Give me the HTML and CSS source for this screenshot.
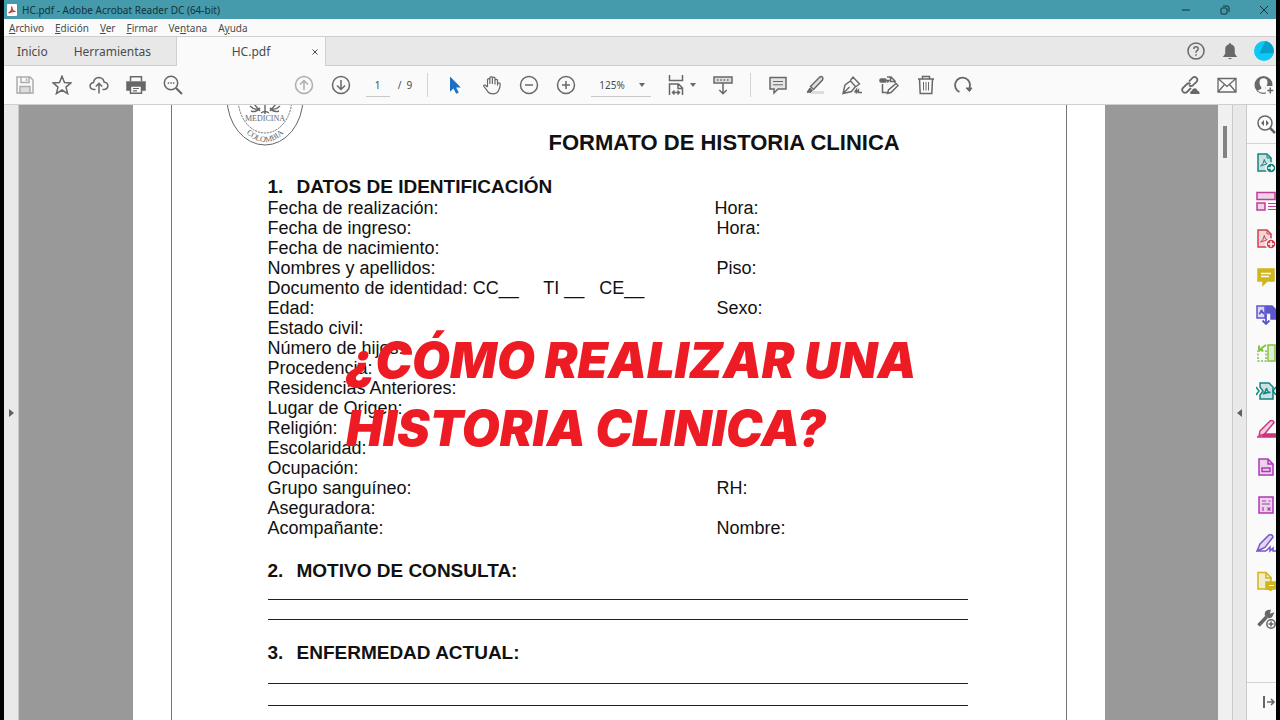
FILE: index.html
```html
<!DOCTYPE html>
<html lang="es">
<head>
  <meta charset="UTF-8" />
  <meta name="viewport" content="width=device-width, initial-scale=1.0" />
  <title>HC.pdf - Adobe Acrobat Reader DC (64-bit)</title>
  <link rel="stylesheet" href="styles.css">
</head>
<body>

  <div class="window">
    <header class="titlebar">
      <svg class="app-icon" viewBox="0 0 10 12"><rect width="10" height="12" rx="1" fill="#fff"/><path d="M1.5 9C4 8 5 5 4.700 2.500C5 6 6.500 7.500 8.500 7.500C6 7 4 7.500 1.500 9Z" fill="none" stroke="#d3302f" stroke-width="1.200"/></svg>
      <span class="titlebar-text">HC.pdf - Adobe Acrobat Reader DC (64-bit)</span>
      <div class="window-buttons">
        <button aria-label="Minimizar"><svg viewBox="0 0 10 10"><path d="M1 5h8"/></svg></button>
        <button aria-label="Restaurar"><svg viewBox="0 0 10 10"><rect x="1" y="3" width="6" height="6" rx="1"/><path d="M3 1h5l1 1v5"/></svg></button>
        <button aria-label="Cerrar"><svg viewBox="0 0 10 10"><path d="M1 1l8 8M9 1l-8 8"/></svg></button>
      </div>
    </header>

    <nav class="menubar">
      <button><u>A</u>rchivo</button>
      <button><u>E</u>dición</button>
      <button><u>V</u>er</button>
      <button><u>F</u>irmar</button>
      <button>Ve<u>n</u>tana</button>
      <button>A<u>y</u>uda</button>
    </nav>

    <div class="tabs">
      <div class="tabs-home">
        <button>Inicio</button>
        <button>Herramientas</button>
      </div>
      <div class="tab-active">
        <span>HC.pdf</span>
        <button aria-label="Cerrar pestaña"><svg viewBox="0 0 8 8"><path d="M1.500 1.500l5 5M6.500 1.500l-5 5"/></svg></button>
      </div>
      <div class="tabs-account">
        <button class="icon" aria-label="Ayuda"><svg viewBox="0 0 20 20"><circle cx="10" cy="10" r="8"/><path d="M7.800 8q0-2.200 2.200-2.200t2.200 2q0 1.200-1.200 1.900q-1 .7-1 2M10 13.200v1.600"/></svg></button>
        <button class="icon" aria-label="Notificaciones"><svg viewBox="0 0 20 20"><path class="solid" d="M10 2q1 0 1 1.200q3.800.8 3.800 5.300v4.200l2.400 3.300H2.800l2.400-3.300V8.500q0-4.500 3.800-5.300q0-1.200 1-1.200ZM8 17h4q-2 2.500-4 0Z" stroke="none"/></svg></button>
        <button class="icon" aria-label="Cuenta"><svg viewBox="0 0 20 20"><circle cx="10" cy="10" r="10" fill="#0cc8f4" stroke="none"/><path d="M11 1L5.500 12.500L19.500 12A10 10 0 0 0 11 0Z" fill="#079fcb" stroke="none"/></svg></button>
      </div>
    </div>

    <div class="toolbar">
      <div class="tools">
        <button class="icon faded" aria-label="Guardar"><svg viewBox="0 0 20 20"><path d="M2 2h13l3 3v13H2ZM6 2v5.500h8V2M11.500 3.500v2.500"/><rect x="5" y="11.500" width="10" height="6.500" fill="#ddd"/></svg></button>
        <button class="icon" aria-label="Destacar"><svg viewBox="0 0 20 20"><path d="M10 1.200l2.500 6.300l6.500.4l-5 4.200l1.600 6.500L10 15l-5.600 3.600L6 12.100l-5-4.200l6.500-.4Z"/></svg></button>
        <button class="icon" aria-label="Subir a la nube"><svg viewBox="0 0 20 20"><path d="M6.500 14.500H5q-4-.3-3.900-3.700q.3-3 3.400-3.300Q5.300 2.600 9.800 2.500q4.400.2 5.400 4.700q3.700.3 3.700 3.700q-.3 3.300-3.900 3.600h-1.500M10 18.500V8.500M6.800 11.500L10 8.300l3.200 3.200"/></svg></button>
        <button class="icon" aria-label="Imprimir"><svg viewBox="0 0 20 20"><path class="solid" d="M1 7h18v8h-3v-3H4v3H1Z"/><path d="M4.500 6V1.800h11V6"/><path d="M4.500 11h11v7.200h-11Z" fill="#fafafa"/><path d="M7 13.500h6M7 15.800h4" stroke-width="1.200"/></svg></button>
        <button class="icon" aria-label="Buscar"><svg viewBox="0 0 20 20"><circle cx="8" cy="8" r="6.700"/><path d="M13 13l6 6" stroke-width="2.200"/><path d="M4.700 8h1.500M7.300 8h1.500M9.900 8h1.500"/></svg></button>
      </div>

      <div class="tools tools-main">
        <button class="icon faded" aria-label="Página anterior"><svg viewBox="0 0 20 20"><circle cx="10" cy="10" r="8.500"/><path d="M10 15V5.500M6 9.500l4-4l4 4"/></svg></button>
        <button class="icon" aria-label="Página siguiente"><svg viewBox="0 0 20 20"><circle cx="10" cy="10" r="8.500"/><path d="M10 5v9.500M6 10.500l4 4l4-4"/></svg></button>
        <div class="page-number">
          <input type="text" value="1" aria-label="Número de página">
          <span>/&nbsp; 9</span>
        </div>
        <i class="separator"></i>
        <button class="icon" aria-label="Seleccionar"><svg viewBox="0 0 20 20"><path d="M5 1.500v15.200l3.500-3.200l2.700 5.300l2.600-1.300l-2.700-5h4.700Z" fill="#1d6fc4" stroke="none"/></svg></button>
        <button class="icon" aria-label="Mano"><svg viewBox="0 0 20 20"><path d="M5.500 12V4.500q1.200-1.600 2.400 0V9M7.900 9V2.500q1.200-1.800 2.500 0V9M10.400 3q1.300-1.600 2.600 0v6.500M13 5q1.300-1.400 2.500 0v5.500M15.500 8.500q1.400-1.400 2.700.2q0 4-1.600 6.800q-1.600 3.400-5.600 3.400q-4 0-5.700-3L1.600 11q.8-2.400 3.900 1" stroke-width="1.200"/></svg></button>
        <button class="icon" aria-label="Reducir"><svg viewBox="0 0 20 20"><circle cx="10" cy="10" r="8.500"/><path d="M6 10h8"/></svg></button>
        <button class="icon" aria-label="Ampliar"><svg viewBox="0 0 20 20"><circle cx="10" cy="10" r="8.500"/><path d="M6 10h8M10 6v8"/></svg></button>
        <div class="zoom">
          <select aria-label="Nivel de zoom"><option>100%</option><option selected>125%</option><option>150%</option></select>
          <svg class="caret" viewBox="0 0 6 4"><path d="M0 0h6L3 4Z"/></svg>
        </div>
        <button class="icon fit" aria-label="Ajustar página"><svg viewBox="0 0 20 20"><path d="M3.500 0v5.500h13V0M3.500 20V9h9l4 4v7M12 9.500V13.500h4M6.500 17.500h7M8.500 15.500l-2 2l2 2M11.500 15.500l2 2l-2 2"/></svg><svg class="caret" viewBox="0 0 6 4"><path d="M0 0h6L3 4Z"/></svg></button>
        <button class="icon" aria-label="Mostrar herramientas"><svg viewBox="0 0 20 20"><rect x="1" y="2" width="18" height="6" fill="#ddd"/><path d="M4 5h1.500M7.300 5h1.500M10.600 5h1.500M14 5h1.500M10 8v10.500M6.300 15l3.700 3.700l3.700-3.700"/></svg></button>
        <i class="separator"></i>
        <button class="icon" aria-label="Comentario"><svg viewBox="0 0 20 20"><path d="M2 2.500h16v11.500h-8L6 18v-4H2Z" fill="#e4e4e4"/><path d="M5 6.500h10M5 9.800h10" stroke-width="1"/></svg></button>
        <button class="icon" aria-label="Resaltar"><svg viewBox="0 0 20 20"><path d="M5 16h14v3H5Z" fill="#ddd" stroke="none"/><path d="M5.500 11.500L14.800 2q1.600-1 2.700.2q1 1.300 0 2.700L8.500 14.500Z" fill="#ddd"/><path class="solid" d="M4.800 13l2.500 2.500l-1.500 1.800H2Z" stroke-width="1"/></svg></button>
        <button class="icon" aria-label="Firmar"><svg viewBox="0 0 20 20"><path d="M1 18.500L3 10L8.500 6L13.500 11.500L9.500 16.500ZM1.300 18.200L7.500 12M8.500 5.500L11 2L17.500 9L14 11.500M12.500 17.500l2-3v3l2-2.500v2.500H20" stroke-width="1.400"/></svg></button>
        <button class="icon" aria-label="Sellar"><svg viewBox="0 0 20 20"><path d="M8 2h4l4 4v2M11.500 2.500V6.500h4M3.500 9v8.500H8M17 8.500l2 2L12 17.500l-3.500 1l1-3.500Z"/><rect class="solid" x="1" y="4" width="6" height="3" rx="1"/><path d="M7 5.500h3l-1.800 2"/></svg></button>
        <button class="icon" aria-label="Eliminar"><svg viewBox="0 0 20 20"><path d="M2 4h16M6.500 3.500V1.500h7v2M3.500 4l.7 14.500h11.600L16.500 4"/><path d="M7.500 7v8.500M10 7v8.500M12.500 7v8.500" stroke-width="1"/></svg></button>
        <button class="icon" aria-label="Girar"><svg viewBox="0 0 20 20"><path d="M6.500 17A7.500 7.500 0 1 1 16.500 13" stroke-width="1.800"/><path class="solid" d="M13 13h6l-2.500 3.500Z" stroke-width="1"/></svg></button>
      </div>

      <div class="tools tools-share">
        <button class="icon" aria-label="Compartir vínculo"><svg viewBox="0 0 20 20"><path d="M9 6.500L12.500 2.800q2-1.800 4 0q1.800 2 0 4L13 10.200q-2 1.700-4 0M11 13l-4 4q-2 1.600-4-.2q-1.800-2 0-4l4-3.800q2-1.500 3.500 0" stroke-width="1.800"/><path class="solid" d="M10.500 19q-1-2.500 1.300-3.200q.7-2.600 3-2.500q2 .1 2.500 2.200q2.700.5 2.200 3.500Z" stroke="none"/></svg></button>
        <button class="icon" aria-label="Correo"><svg viewBox="0 0 20 20"><path d="M1 3.500h18v13.500H1ZM1 3.500l9 8l9-8M1 17l6.500-7.500M19 17l-6.500-7.500" stroke-width="1.300"/></svg></button>
        <button class="icon" aria-label="Invitar"><svg viewBox="0 0 20 20"><circle class="solid" cx="9.500" cy="10" r="9" stroke="none"/><path d="M9.500 3.200q4 0 4 4.300q0 3-1.800 4.800v1.500l3.800 2q-2.500 2-6 2t-6-2l3.800-2v-1.500Q5.500 10.500 5.500 7.500q0-4.300 4-4.300Z" fill="#fafafa" stroke="none"/><path d="M12 11h8v9h-8Z" fill="#fafafa" stroke="none"/><path d="M16.300 12.500v6M13.300 15.500h6"/></svg></button>
      </div>
    </div>

    <main class="workspace">
      <button class="pane-toggle" aria-label="Panel de navegación"><svg viewBox="0 0 5 8"><path d="M0 0l5 4l-5 4Z"/></svg></button>

      <div class="viewer">
        <article class="page">
          <div class="page-frame">
            <div class="page-head">
              <svg class="seal" viewBox="0 0 90 45">
                <ellipse cx="45" cy="-7" rx="38" ry="47"/>
                <ellipse cx="45" cy="-7" rx="27" ry="35" stroke-dasharray="2 1"/>
                <path d="M30 1q5 5 10 2q-4 5-9 3M60 1q-5 5-10 2q4 5 9 3M34-1l6 7M56-1l-6 7M45 0v9M41 8q4-3 8 0" stroke-width="1.400"/>
                <path id="seal-arc" d="M16 12Q28 37 45 37T74 12" stroke="none"/>
                <text x="45" y="16" text-anchor="middle">MEDICINA</text>
                <text><textPath href="#seal-arc" startOffset="50%" text-anchor="middle">COLOMBIA</textPath></text>
              </svg>
              <h1>FORMATO DE HISTORIA CLINICA</h1>
            </div>

            <section>
              <h2><span>1.</span>DATOS DE IDENTIFICACIÓN</h2>
              <ul class="fields">
                <li><span class="wide">Fecha de realización:</span><span>Hora:</span></li>
                <li><span>Fecha de ingreso:</span><span>Hora:</span></li>
                <li>Fecha de nacimiento:</li>
                <li><span>Nombres y apellidos:</span><span>Piso:</span></li>
                <li>Documento de identidad: CC__     TI __   CE__</li>
                <li><span>Edad:</span><span>Sexo:</span></li>
                <li>Estado civil:</li>
                <li>Número de hijos:</li>
                <li>Procedencia:</li>
                <li>Residencias Anteriores:</li>
                <li>Lugar de Origen:</li>
                <li>Religión:</li>
                <li>Escolaridad:</li>
                <li>Ocupación:</li>
                <li><span>Grupo sanguíneo:</span><span>RH:</span></li>
                <li>Aseguradora:</li>
                <li><span>Acompañante:</span><span>Nombre:</span></li>
              </ul>
            </section>

            <section>
              <h2><span>2.</span>MOTIVO DE CONSULTA:</h2>
              <hr>
              <hr>
            </section>

            <section class="loose">
              <h2><span>3.</span>ENFERMEDAD ACTUAL:</h2>
              <hr>
              <hr>
            </section>
          </div>
        </article>
      </div>

      <div class="scrollbar"><div class="scrollbar-thumb"></div></div>
      <button class="pane-toggle pane-toggle-right" aria-label="Panel de herramientas"><svg viewBox="0 0 5 8"><path d="M5 0L0 4l5 4Z"/></svg></button>

      <aside class="side-tools">
        <button class="search" aria-label="Buscar herramientas"><svg viewBox="0 0 20 20"><circle cx="9" cy="9" r="7"/><path d="M14 14l5 5" stroke-width="2.500"/><path d="M8 6v6L5 9ZM10 6v6l3-3Z" fill="currentColor" stroke="none"/></svg></button>
        <button class="teal" aria-label="Exportar PDF"><svg viewBox="0 0 20 20"><path class="tint" d="M2 1h9l4 4v13H2Z"/><path d="M11 1v4h4M4.500 13q3.500-2 3.800-6.500q.5 4.500 4.200 5q-4-.5-8 1.500" stroke-width="1"/><circle cx="15" cy="15" r="5" fill="currentColor" stroke="#fafafa"/><path d="M12 15h5M15 12.800l2.200 2.200l-2.200 2.200" stroke="#fff"/></svg></button>
        <button class="magenta" aria-label="Organizar páginas"><svg viewBox="0 0 20 20"><path class="tint" d="M1 1.500h18v7H1ZM1 12h8v7H1Z"/><path d="M12 12.500h8M12 15.500h8M12 18.500h8" stroke-width="1"/></svg></button>
        <button class="red" aria-label="Crear PDF"><svg viewBox="0 0 20 20"><path class="tint" d="M2 1h9l4 4v13H2Z"/><path d="M11 1v4h4M4.500 13q3.500-2 3.800-6.500q.5 4.500 4.200 5q-4-.5-8 1.500" stroke-width="1"/><circle cx="15" cy="15" r="5" fill="currentColor" stroke="#fafafa"/><path d="M12 15h6M15 12v6" stroke="#fff"/></svg></button>
        <button class="yellow" aria-label="Comentar"><svg viewBox="0 0 20 20"><path d="M2 2h16v12h-7l-4 4v-4H2Z" fill="currentColor"/><path d="M5 6.500h10M5 9.500h8" stroke="#fff"/></svg></button>
        <button class="indigo" aria-label="Combinar archivos"><svg viewBox="0 0 20 20"><path class="tint" d="M1 1h8v12H1Z"/><path d="M10 1h6l4 4v9h-5V8h-5Z" fill="currentColor"/><path d="M3 9q2-1 2.500-4q.5 3 3 3.500M10 9v10M6.500 15.500L10 19l3.500-3.500" stroke-width="1.800"/></svg></button>
        <button class="green" aria-label="Comprimir"><svg viewBox="0 0 20 20"><path class="tint" d="M12 2h7v16h-7Z"/><path d="M2 8h8v10H2Z" stroke-dasharray="2 1.500"/><path d="M3 7V2.500M3 7h4M3 7l7-5" stroke-width="2"/></svg></button>
        <button class="teal" aria-label="Optimizar PDF"><svg viewBox="0 0 20 20"><path class="tint" d="M4 2h9l4 4v12H4V14l3-4l-3-4Z"/><path d="M0 6l3 4l-3 4M20 6l-3 4l3 4M7 13q3-2 3.500-6q.5 4 4 4.500q-4-.5-7.500 1.500"/></svg></button>
        <button class="pink" aria-label="Editar PDF"><svg viewBox="0 0 20 20"><path class="tint" d="M4 12L14 2q3-1.500 4 1.500L8.500 15L3 17Z"/><path d="M1 18h5l3-3h11v3Z" fill="currentColor"/></svg></button>
        <button class="purple" aria-label="Rellenar"><svg viewBox="0 0 20 20"><path class="tint" d="M3 2h9l5 5v11H3ZM6 11h8v3.500H6Z"/><path d="M12 2v5h5"/></svg></button>
        <button class="purple" aria-label="Preparar formulario"><svg viewBox="0 0 20 20"><path class="tint" d="M3 2h14v16H3Z"/><path d="M6 6h4M6 9h8M7 12v4M11.500 12.500l3 3M14.500 12.500l-3 3M12.500 6h2" stroke-width="1.200"/></svg></button>
        <button class="violet" aria-label="Rellenar y firmar"><svg viewBox="0 0 20 20"><path class="tint" d="M1 18L4 11L13 2q3.500-1 4 2L9 14.500ZM1 18h9"/><path d="M10 18l4-4v4l3-3v3h3"/></svg></button>
        <button class="yellow" aria-label="Enviar comentarios"><svg viewBox="0 0 20 20"><path class="tint" d="M2 1.500h8l5 5V18H2Z"/><path d="M10 2v5h5"/><path d="M10 11h10v7h-4l-2 2v-2h-4Z" fill="currentColor"/><path d="M13 14.500h5" stroke="#fff" stroke-width="1"/></svg></button>
        <button aria-label="Más herramientas"><svg viewBox="0 0 20 20"><path d="M2.500 16.500L10.500 8" stroke-width="3.500"/><path d="M14 1.500q-5 0-4.500 4.500q2 4 6 1.500l1.500-3l-3 1l-1-1Z" fill="currentColor"/><circle cx="15" cy="15" r="4.200" fill="#fafafa"/><path d="M12.500 15h5M15 12.500v5"/></svg></button>
        <button class="collapse" aria-label="Contraer"><svg viewBox="0 0 20 20"><path d="M8 4v12" stroke-width="2"/><path d="M11 10h7M15 7l3 3l-3 3"/></svg></button>
      </aside>
    </main>

    <p class="caption">¿CÓMO REALIZAR UNA<br>HISTORIA CLINICA?</p>
  </div>

</body>
</html>
```
FILE: styles.css
```css
* {
  box-sizing: border-box;
}
body {
  margin: 0;
  background-color: #000;
  color: #4b4b4b;
  font-family: "Noto Sans", sans-serif;
  font-size: 10px;
}
button {
  border: 0;
  padding: 0;
  background: none;
  color: inherit;
  font: inherit;
}
svg {
  display: block;
  fill: none;
  stroke: currentColor;
  stroke-width: 1.5;
}
.solid {
  fill: currentColor;
}
.window {
  position: relative;
  display: flex;
  flex-direction: column;
  height: 100vh;
  margin: 0 4px;
  overflow: hidden;
  background-color: #fafafa;
}

/* title bar and menus */
.titlebar {
  display: flex;
  align-items: center;
  height: 19px;
  padding-left: 3px;
  background-color: #459aab;
  color: #14323a;
}
.app-icon {
  width: 10px;
  height: 12px;
  margin-right: 5px;
  stroke: none;
}
.window-buttons {
  display: flex;
  gap: 15px;
  margin-left: auto;
}
.window-buttons button {
  width: 24px;
}
.window-buttons svg {
  width: 10px;
  height: 10px;
  margin: auto;
  stroke-width: 1;
}
.menubar {
  display: flex;
  gap: 11px;
  height: 17px;
  padding-left: 5px;
}

/* tabs */
.tabs {
  display: flex;
  height: 30px;
  border-top: 1px solid #cfcfcf;
  background-color: #e8e8e8;
  font-size: 12px;
}
.tabs-home {
  display: flex;
  gap: 26px;
  width: 172px;
  padding-left: 13px;
  border-bottom: 1px solid #cfcfcf;
}
.tab-active {
  display: grid;
  grid-template-columns: 1fr auto 1fr;
  align-items: center;
  width: 150px;
  border: solid #cfcfcf;
  border-width: 0 1px;
  background-color: #fafafa;
}
.tab-active span {
  grid-column: 2;
}
.tab-active button {
  justify-self: end;
  margin-right: 6px;
}
.tab-active svg {
  width: 8px;
  height: 8px;
  stroke-width: 1;
}
.tabs-account {
  display: flex;
  flex: 1;
  justify-content: flex-end;
  align-items: center;
  gap: 10px;
  border-bottom: 1px solid #cfcfcf;
}

/* toolbar */
.toolbar {
  display: flex;
  align-items: center;
  height: 39px;
  padding-left: 9px;
  border-bottom: 1px solid #cfcfcf;
}
.tools {
  display: flex;
  align-items: center;
  gap: 13px;
}
.tools-main {
  flex: 1;
  justify-content: center;
  padding-right: 96px;
}
.icon {
  display: flex;
  justify-content: center;
  align-items: center;
  width: 24px;
  height: 24px;
  color: #686868;
}
.icon svg {
  flex: none;
  width: 20px;
  height: 20px;
}
.faded {
  color: #adadad;
}
.page-number {
  display: flex;
  align-items: center;
  gap: 8px;
}
.page-number input {
  width: 24px;
  height: 24px;
  border: 0;
  border-bottom: 1px solid #c8c8c8;
  padding: 0;
  background: none;
  color: inherit;
  font: inherit;
  text-align: center;
}
.separator {
  width: 1px;
  height: 24px;
  margin: 0 2px;
  background-color: #d4d4d4;
}
.zoom {
  display: flex;
  align-items: center;
  width: 60px;
  height: 24px;
  border-bottom: 1px solid #c8c8c8;
}
.zoom select {
  flex: 1;
  appearance: none;
  border: 0;
  padding: 0 8px;
  background: none;
  color: inherit;
  font: inherit;
}
.zoom .caret {
  margin-right: 6px;
}
.caret,
.icon .caret {
  width: 6px;
  height: 4px;
  fill: #686868;
  stroke: none;
}
.fit {
  gap: 4px;
  width: 34px;
}

/* workspace */
.workspace {
  display: flex;
  flex: 1;
  min-height: 0;
}
.pane-toggle {
  display: flex;
  justify-content: center;
  align-items: center;
  width: 15px;
  border-right: 1px solid #c9c9c9;
  background-color: #e9e9e9;
}
.pane-toggle svg {
  width: 5px;
  height: 8px;
  fill: #606060;
  stroke: none;
}
.pane-toggle-right {
  border-left: 1px solid #c9c9c9;
}
.viewer {
  flex: 1;
  overflow: hidden;
  background-color: #999;
}
.scrollbar {
  width: 14px;
  padding: 21px 5px 0;
  background-color: #f0f0f0;
}
.scrollbar-thumb {
  height: 32px;
  background-color: #828282;
}

/* document */
.page {
  max-width: 972px;
  min-height: 100%;
  margin: 0 auto;
  padding: 0 38px;
  background-color: #fff;
  color: #111;
  font-family: "Liberation Sans", Arial, sans-serif;
  font-size: 18px;
  line-height: 20px;
}
.page-frame {
  min-height: 100vh;
  border: solid #777;
  border-width: 0 1px;
}
.page-head {
  display: flex;
  gap: 239px;
  height: 71px;
  padding-left: 48px;
}
.seal {
  width: 90px;
  height: 45px;
  color: #666;
  stroke-width: 1;
}
.seal text {
  fill: #666;
  stroke: none;
  font-family: "Liberation Serif", serif;
  font-size: 8px;
}
.page h1 {
  margin: 25px 0 0;
  font-size: 22px;
  line-height: 26px;
  white-space: nowrap;
}
.page section {
  margin: 0 98px 22px 96px;
}
.page h2 {
  display: flex;
  margin: 0;
  font-size: 19px;
  line-height: 22px;
}
.page h2 span {
  width: 29px;
}
.fields {
  margin: 0;
  padding: 0;
  list-style: none;
}
.fields li {
  display: flex;
  white-space: pre;
}
.fields span:first-child {
  width: 449px;
}
.fields .wide:first-child {
  width: 447px;
}
.page hr {
  height: 1px;
  margin: 17px 0 19px;
  border: 0;
  background-color: #222;
}
.page .loose hr {
  margin: 19px 0 21px;
}
.page section hr + hr {
  margin: 0;
}

/* right tool pane */
.side-tools {
  display: flex;
  flex-direction: column;
  width: 29px;
  overflow: hidden;
  color: #666;
}
.side-tools button {
  flex: none;
  height: 38px;
  padding-left: 9px;
}
.side-tools svg {
  width: 20px;
  height: 20px;
}
.side-tools .search {
  height: 39px;
  border-bottom: 1px solid #d4d4d4;
}
.side-tools .collapse {
  margin-top: auto;
  border-top: 1px solid #d4d4d4;
}
.tint {
  fill: currentColor;
  fill-opacity: 0.2;
}
.teal {
  color: #148481;
}
.magenta {
  color: #c03c96;
}
.red {
  color: #d43f50;
}
.yellow {
  color: #d1b51c;
}
.indigo {
  color: #5d56ce;
}
.green {
  color: #82c341;
}
.pink {
  color: #cf347d;
}
.purple {
  color: #b037b5;
}
.violet {
  color: #7b55c7;
}

.caption {
  position: absolute;
  top: 327px;
  left: 342px;
  margin: 0;
  color: #ed1c24;
  font-family: Inter, sans-serif;
  font-size: 49px;
  font-style: italic;
  font-weight: 900;
  line-height: 68px;
  white-space: nowrap;
}
```
